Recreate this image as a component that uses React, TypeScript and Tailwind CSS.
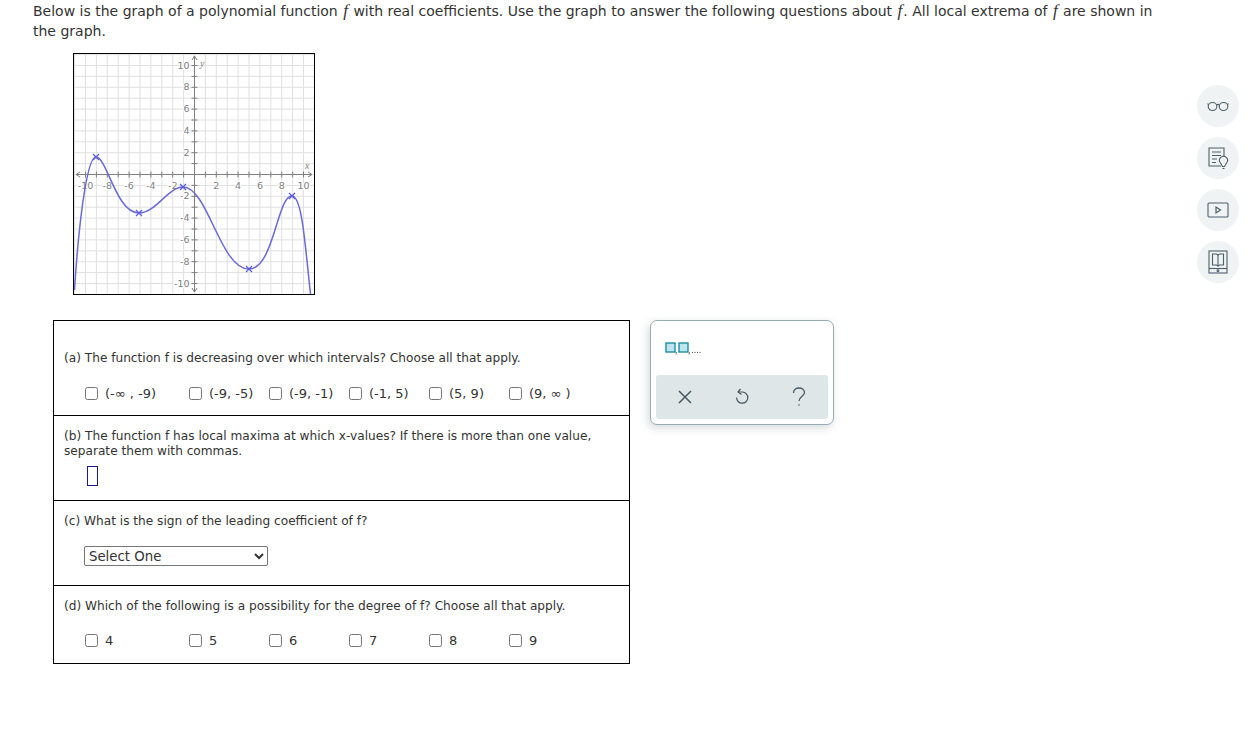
const ox = 120.5;
const oy = 120.5;
const unit = 10.9;
const px = (u: number) => ox + u * unit;
const py = (v: number) => oy - v * unit;
const steps = [-11, -10, -9, -8, -7, -6, -5, -4, -3, -2, -1, 0, 1, 2, 3, 4, 5, 6, 7, 8, 9, 10, 11];
const xLabels = [-10, -8, -6, -4, -2, 2, 4, 6, 8, 10];
const yLabels = [10, 8, 6, 4, 2, -2, -4, -6, -8, -10];
const extrema = [
  [22, 103],
  [65, 159],
  [109, 133],
  [175, 215],
  [218, 142],
];

function Graph() {
  return (
    <svg width="240" height="240" viewBox="0 0 240 240" className="block">
      {steps.map((s) => (
        <g key={s} stroke="#e0e0e0" strokeWidth="1">
          <line x1={px(s)} y1="0" x2={px(s)} y2="240" />
          <line x1="0" y1={py(s)} x2="240" y2={py(s)} />
        </g>
      ))}
      <g stroke="#808080" strokeWidth="1" fill="none">
        <line x1="2" y1={oy} x2="238" y2={oy} />
        <line x1={ox} y1="2" x2={ox} y2="238" />
        <path d="M6 118 L2 120.5 L6 123 M234 118 L238 120.5 L234 123" />
        <path d="M118 6 L120.5 2 L123 6 M118 234 L120.5 238 L123 234" />
        {steps.slice(1, -1).map((s) => (
          <g key={s}>
            <line x1={px(s)} y1={oy - 3} x2={px(s)} y2={oy + 3} />
            <line x1={ox - 3} y1={py(s)} x2={ox + 3} y2={py(s)} />
          </g>
        ))}
      </g>
      <g fill="#808080" fontSize="9.5" style={{ fontFamily: '"DejaVu Sans", sans-serif' }}>
        {xLabels.map((n) => (
          <text key={n} x={px(n)} y="135" textAnchor="middle" stroke="#fff" strokeWidth="2" paintOrder="stroke">
            {n}
          </text>
        ))}
        {yLabels.map((n) => (
          <text key={n} x={ox - 5} y={py(n) + 3} textAnchor="end" stroke="#fff" strokeWidth="2" paintOrder="stroke">
            {n}
          </text>
        ))}
      </g>
      <g fill="#808080" fontSize="10" fontStyle="italic" style={{ fontFamily: '"Liberation Serif", serif' }}>
        <text x="126" y="13">y</text>
        <text x="231" y="115">x</text>
      </g>
      <path
        d="M0.5 236 C4 180 12 103 22 103 C33 103 42 159 65 159 C82 159 94 133 109 133 C134 133 146 215 175 215 C200 215 203 142 218 142 C228 142 231 190 236.5 240"
        fill="none"
        stroke="#6a6ad8"
        strokeWidth="1.5"
      />
      <g stroke="#5a5ae0" strokeWidth="1.2">
        {extrema.map(([x, y]) => (
          <path key={x} d={`M${x - 3} ${y - 3} L${x + 3} ${y + 3} M${x + 3} ${y - 3} L${x - 3} ${y + 3}`} />
        ))}
      </g>
    </svg>
  );
}

function Option({ label, width }: { label: string; width: string }) {
  return (
    <label className={`flex items-center ${width}`}>
      <input type="checkbox" className="m-0 h-[13px] w-[13px] shrink-0" />
      <span className="ml-[7px] whitespace-pre text-[13px]">{label}</span>
    </label>
  );
}

function Options({ labels, className }: { labels: string[]; className: string }) {
  return (
    <div className={`flex pl-[21px] ${className}`}>
      {labels.map((label, i) => (
        <Option key={label} label={label} width={i === 0 ? 'w-[104px]' : 'w-[80px]'} />
      ))}
    </div>
  );
}

function RailButton({ children }: { children: React.ReactNode }) {
  return (
    <div className="flex h-[42px] w-[42px] items-center justify-center rounded-full bg-[#eff3f4]">{children}</div>
  );
}

function F() {
  return (
    <i className="mx-[1px] text-[17px] leading-none" style={{ fontFamily: '"Liberation Serif", serif' }}>
      f
    </i>
  );
}

export default function App() {
  return (
    <div
      className="flex h-[740px] w-[1259px] bg-white text-[#333]"
      style={{ fontFamily: '"DejaVu Sans", Verdana, sans-serif' }}
    >
      <div className="w-[1197px] pl-[33px]">
        <p className="w-[1140px] text-[14px] leading-[20px] pt-px">
          Below is the graph of a polynomial function <F /> with real coefficients. Use the graph to answer the
          following questions about <F />. All local extrema of <F /> are shown in the graph.
        </p>

        <div className="ml-[40px] mt-[12px] h-[242px] w-[242px] border border-black">
          <Graph />
        </div>

        <div className="ml-[20px] mt-[25px] flex items-start gap-[20px]">
          <div className="w-[577px] border border-black text-[12.15px] leading-[15px]">
            <div className="h-[95px] border-b border-black pt-[30px] pl-[10px]">
              <p>(a) The function f is decreasing over which intervals? Choose all that apply.</p>
              <Options
                className="mt-[20px]"
                labels={['(-∞ , -9)', '(-9, -5)', '(-9, -1)', '(-1, 5)', '(5, 9)', '(9, ∞ )']}
              />
            </div>

            <div className="h-[85px] border-b border-black pt-[13px] pl-[10px]">
              <p className="w-[540px]">
                (b) The function f has local maxima at which x-values? If there is more than one value, separate them
                with commas.
              </p>
              <div className="ml-[23px] mt-[7px] h-[20px] w-[11px] border border-[#1c1c8c]" />
            </div>

            <div className="h-[85px] border-b border-black pt-[13px] pl-[10px]">
              <p>(c) What is the sign of the leading coefficient of f?</p>
              <select className="ml-[20px] mt-[17px] block h-[20px] w-[184px] rounded-[2px] border border-[#767676] bg-white text-[13.3px] leading-none text-[#333]">
                <option>Select One</option>
              </select>
            </div>

            <div className="h-[77px] pt-[13px] pl-[10px]">
              <p>(d) Which of the following is a possibility for the degree of f? Choose all that apply.</p>
              <Options className="mt-[19px]" labels={['4', '5', '6', '7', '8', '9']} />
            </div>
          </div>

          <div className="h-[105px] w-[184px] rounded-[7px] border border-[#9aacb0] bg-white px-[5px] shadow-[-2px_3px_8px_rgba(90,110,120,0.25)]">
            <div className="flex h-[54px] items-center pl-[9px]">
              <svg width="40" height="14" viewBox="0 0 40 14">
                <rect x="1" y="2" width="9" height="9" fill="#bfe6ee" stroke="#1c8fa8" strokeWidth="1.4" />
                <rect x="14" y="2" width="9" height="9" fill="#bfe6ee" stroke="#1c8fa8" strokeWidth="1.4" />
                <path d="M11.5 11 L11 13.5 M24.5 11 L24 13.5" stroke="#555" strokeWidth="0.8" />
                <circle cx="27.5" cy="11.4" r="0.6" fill="#555" />
                <circle cx="30" cy="11.4" r="0.6" fill="#555" />
                <circle cx="32.5" cy="11.4" r="0.6" fill="#555" />
                <circle cx="35" cy="11.4" r="0.6" fill="#555" />
              </svg>
            </div>
            <div className="flex h-[44px] items-center rounded-[3px] bg-[#dfe6e8] text-[#46575f]">
              <div className="flex w-[58px] justify-center">
                <svg width="14" height="14" viewBox="0 0 14 14" fill="none" stroke="currentColor" strokeWidth="1.5">
                  <path d="M1 1 L13 13 M13 1 L1 13" />
                </svg>
              </div>
              <div className="flex w-[58px] justify-center">
                <svg width="16" height="18" viewBox="0 0 16 18" fill="none" stroke="currentColor" strokeWidth="1.2">
                  <path d="M6.5 1 L4 4 L7.5 6.5" />
                  <path d="M4.2 4 H8.5 A5.6 5.6 0 1 1 2.6 9.5" />
                </svg>
              </div>
              <div className="flex w-[58px] justify-center">
                <svg width="14" height="20" viewBox="0 0 14 20" fill="none" stroke="currentColor" strokeWidth="1.3">
                  <path d="M1.5 6 C1.5 2.5 4 1 7 1 C10 1 12.5 2.8 12.5 5.6 C12.5 9 7 9.5 7 14" />
                  <circle cx="7" cy="18" r="0.8" fill="currentColor" stroke="none" />
                </svg>
              </div>
            </div>
          </div>
        </div>
      </div>

      <div className="flex w-[42px] flex-col gap-[10px] pt-[85px]">
        <RailButton>
          <svg width="22" height="12" viewBox="0 0 22 12" fill="none" stroke="#4d6068" strokeWidth="1.1">
            <ellipse cx="5.5" cy="6.5" rx="4.3" ry="4" />
            <ellipse cx="16.5" cy="6.5" rx="4.3" ry="4" />
            <path d="M9.5 5 C10.3 4.3 11.7 4.3 12.5 5 M1.5 5 L0.6 3.5 M20.5 5 L21.4 3.5" />
          </svg>
        </RailButton>
        <RailButton>
          <svg width="22" height="24" viewBox="0 0 22 24" fill="none" stroke="#4d6068" strokeWidth="1.1">
            <path d="M14 20 H2 V2 H17 V10" />
            <path d="M5 6 H14 M5 9.5 H14 M5 13 H10 M5 16.5 H9" />
            <path d="M13.5 17 A4 4 0 1 1 19.5 17 L17.5 20.5 H15.5 Z" fill="#eff3f4" />
            <path d="M15.5 22.5 H17.5" />
          </svg>
        </RailButton>
        <RailButton>
          <svg width="22" height="16" viewBox="0 0 22 16" fill="none" stroke="#4d6068" strokeWidth="1.1">
            <rect x="1" y="1" width="20" height="14" rx="1" />
            <path d="M9 5 L13.5 8 L9 11 Z" strokeWidth="1.2" />
          </svg>
        </RailButton>
        <RailButton>
          <svg width="20" height="24" viewBox="0 0 20 24" fill="none" stroke="#4d6068" strokeWidth="1.1">
            <rect x="1" y="1" width="18" height="22" />
            <path d="M1 18.5 H19" />
            <path d="M4.5 4 H8.5 L10 5 L11.5 4 H15.5 V15 H11.5 L10 16 L8.5 15 H4.5 Z" />
            <path d="M10 5 V16" />
            <circle cx="10" cy="20.7" r="0.9" />
          </svg>
        </RailButton>
      </div>
    </div>
  );
}
